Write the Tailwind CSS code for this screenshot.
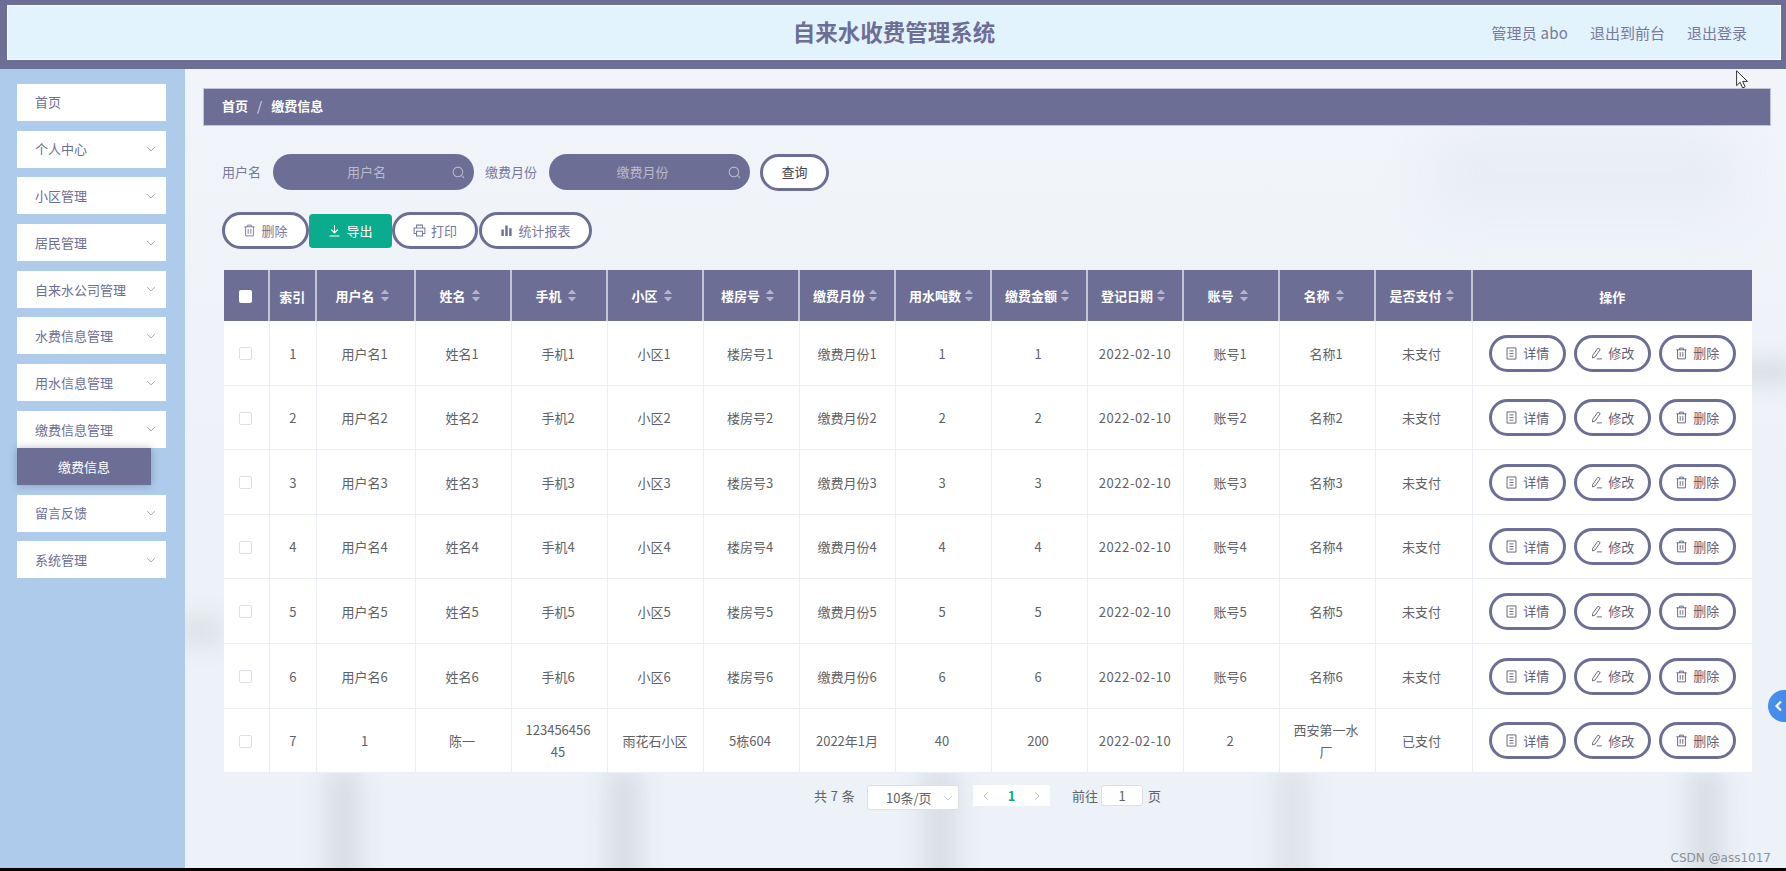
<!DOCTYPE html>
<html lang="zh-CN">
<head>
<meta charset="utf-8">
<title>自来水收费管理系统</title>
<script src="https://cdn.jsdelivr.net/npm/@tailwindcss/browser@4"></script>
</head>
<body class="m-0 overflow-hidden bg-black">
<svg class="hidden" width="0" height="0">
  <symbol id="i-trash" viewBox="0 0 14 14"><path d="M1.5 3h11M5 3V1.2h4V3M2.8 3v9.8h8.4V3M5.6 5.5v5M8.4 5.5v5" fill="none" stroke="currentColor" stroke-width="1"/></symbol>
  <symbol id="i-doc" viewBox="0 0 14 14"><path d="M2.2 1h9.6v12H2.2zM4.8 4.2h4.4M4.8 7h4.4M4.8 9.8h4.4" fill="none" stroke="currentColor" stroke-width="1"/></symbol>
  <symbol id="i-edit" viewBox="0 0 14 14"><path d="M8.6 1.2l2.4 1.6-5.6 8-2.7 1 .2-2.8zM7.2 12.8h5.6" fill="none" stroke="currentColor" stroke-width="1"/></symbol>
  <symbol id="i-print" viewBox="0 0 14 14"><path d="M3.8 4.4V1.2h6.4v3.2M3.6 10.2H1.2V4.4h11.6v5.8h-2.4M3.8 7.8h6.4v5H3.8z" fill="none" stroke="currentColor" stroke-width="1.1"/></symbol>
  <symbol id="i-bars" viewBox="0 0 14 14"><path d="M1.5 6h2.6v7H1.5zM5.7 1.5h2.6V13H5.7zM9.9 4.5h2.6V13H9.9z" fill="currentColor"/></symbol>
  <symbol id="i-down" viewBox="0 0 14 14"><path d="M7 1v8.5M3.4 6L7 9.6 10.6 6M1.6 12.8h10.8" fill="none" stroke="currentColor" stroke-width="1.1"/></symbol>
  <symbol id="i-search" viewBox="0 0 14 14"><circle cx="6.4" cy="6.4" r="5.2" fill="none" stroke="currentColor" stroke-width="1.1"/><path d="M10.2 10.2l2.8 2.8" fill="none" stroke="currentColor" stroke-width="1.1"/></symbol>
  <symbol id="i-chev" viewBox="0 0 12 12"><path d="M1.5 3.8L6 8.3l4.5-4.5" fill="none" stroke="currentColor" stroke-width="1"/></symbol>
  <symbol id="i-sort" viewBox="0 0 10 14"><path d="M5 0.5L9.5 5.5H0.5zM5 13.5L0.5 8.5H9.5z" fill="currentColor"/></symbol>
</svg>

<div class="relative flex h-[871px] w-[1786px] flex-col overflow-hidden font-['Noto_Sans_CJK_SC','Noto_Sans',sans-serif] text-[13px]">

  <header class="h-[69px] shrink-0 bg-[#6d6e95] pb-[9px] pl-[7px] pr-[5px] pt-[5px]">
    <div class="grid h-[55px] grid-cols-[1fr_auto_1fr] items-center border border-white/80 bg-[#e3f3fe] text-[#6d6e95]">
      <div></div>
      <div class="pb-[2px] text-[22.5px] font-bold leading-none">自来水收费管理系统</div>
      <div class="flex justify-end gap-[22px] pr-[33px] text-[15px] leading-none text-[#77789c]">
        <span class="tracking-[0.2px]">管理员 abo</span><span>退出到前台</span><span>退出登录</span>
      </div>
    </div>
  </header>

  <div class="flex min-h-0 flex-1">
    <aside class="flex w-[185px] shrink-0 flex-col gap-[9.7px] bg-[#aecbec] pl-[17px] pt-[15px] text-[#6d6e95]">
      <div class="flex h-[37px] w-[149px] items-center bg-white pb-[1px] pl-[18px]">首页</div>
      <div class="flex h-[37px] w-[149px] items-center justify-between bg-white pl-[18px] pr-[10px]"><span>个人中心</span><svg class="size-[10px] text-[#8e90ad]"><use href="#i-chev"/></svg></div>
      <div class="flex h-[37px] w-[149px] items-center justify-between bg-white pl-[18px] pr-[10px]"><span>小区管理</span><svg class="size-[10px] text-[#8e90ad]"><use href="#i-chev"/></svg></div>
      <div class="flex h-[37px] w-[149px] items-center justify-between bg-white pl-[18px] pr-[10px]"><span>居民管理</span><svg class="size-[10px] text-[#8e90ad]"><use href="#i-chev"/></svg></div>
      <div class="flex h-[37px] w-[149px] items-center justify-between bg-white pl-[18px] pr-[10px]"><span>自来水公司管理</span><svg class="size-[10px] text-[#8e90ad]"><use href="#i-chev"/></svg></div>
      <div class="flex h-[37px] w-[149px] items-center justify-between bg-white pl-[18px] pr-[10px]"><span>水费信息管理</span><svg class="size-[10px] text-[#8e90ad]"><use href="#i-chev"/></svg></div>
      <div class="flex h-[37px] w-[149px] items-center justify-between bg-white pl-[18px] pr-[10px]"><span>用水信息管理</span><svg class="size-[10px] text-[#8e90ad]"><use href="#i-chev"/></svg></div>
      <div>
        <div class="flex h-[37px] w-[149px] items-center justify-between bg-white pl-[18px] pr-[10px]"><span>缴费信息管理</span><svg class="size-[10px] text-[#8e90ad]"><use href="#i-chev"/></svg></div>
        <div class="flex h-[37px] w-[134px] items-center justify-center bg-[#6d6e95] text-white shadow-[0_0_8px_rgba(0,0,0,0.25)]">缴费信息</div>
      </div>
      <div class="flex h-[37px] w-[149px] items-center justify-between bg-white pl-[18px] pr-[10px]"><span>留言反馈</span><svg class="size-[10px] text-[#8e90ad]"><use href="#i-chev"/></svg></div>
      <div class="flex h-[37px] w-[149px] items-center justify-between bg-white pl-[18px] pr-[10px]"><span>系统管理</span><svg class="size-[10px] text-[#8e90ad]"><use href="#i-chev"/></svg></div>
    </aside>

    <main class="relative min-w-0 flex-1 overflow-hidden bg-gradient-to-b from-[#f1f4f9] via-[#eef2f8] to-[#ecf2f8] pl-[18px] pr-[15px] pt-[19px] text-[#606266]">
      <!-- blurred photo backdrop -->
      <div class="absolute bottom-[-30px] left-[141px] h-[130px] w-[34px] bg-[#d8dde4] blur-[12px]"></div>
      <div class="absolute bottom-[-30px] left-[422px] h-[130px] w-[34px] bg-[#d8dde4] blur-[12px]"></div>
      <div class="absolute bottom-[-30px] left-[738px] h-[130px] w-[34px] bg-[#d8dde4] blur-[12px]"></div>
      <div class="absolute bottom-[-30px] left-[1090px] h-[130px] w-[34px] bg-[#dde2e8] blur-[12px]"></div>
      <div class="absolute bottom-[-30px] left-[1504px] h-[130px] w-[34px] bg-[#d8dde4] blur-[12px]"></div>
      <div class="absolute left-[1540px] top-[290px] h-[26px] w-[70px] bg-[#dadfe5] blur-[10px]"></div>
      <div class="absolute left-[-6px] top-[545px] h-[34px] w-[44px] bg-[#dfe3e8] blur-[10px]"></div>
      <div class="absolute left-[1250px] top-[70px] h-[70px] w-[300px] bg-[#e8edf4] blur-[24px]"></div>

      <div class="relative">
        <nav class="flex h-[38px] items-center gap-[8px] border border-white/60 bg-[#6d6e95] pb-[2px] pl-[18px] font-bold text-white">
          <span>首页</span><span class="px-[1px] font-normal text-[#dcdde8]">/</span><span>缴费信息</span>
        </nav>

        <div class="pl-[19px]">
          <div class="mt-[28px] flex h-[36px] items-center">
            <label class="w-[39px] text-[#77789c]">用户名</label>
            <div class="ml-[12px] flex h-[36px] w-[201px] items-center rounded-full bg-[#6d6e95] pr-[9px] text-[#b9bad0]">
              <span class="flex-1 pl-[8px] text-center">用户名</span><svg class="size-[13px]"><use href="#i-search"/></svg>
            </div>
            <label class="ml-[11px] w-[52px] text-[#77789c]">缴费月份</label>
            <div class="ml-[12px] flex h-[36px] w-[201px] items-center rounded-full bg-[#6d6e95] pr-[9px] text-[#b9bad0]">
              <span class="flex-1 pl-[8px] text-center">缴费月份</span><svg class="size-[13px]"><use href="#i-search"/></svg>
            </div>
            <button class="ml-[10px] flex h-[37px] w-[69px] items-center justify-center rounded-full border-[3px] border-[#6d6e95] bg-white text-[#444]">查询</button>
          </div>

          <div class="mt-[22px] flex h-[37px] items-center text-[#77789c]">
            <button class="flex h-[37px] w-[87px] items-center justify-center gap-[5px] rounded-full border-[3px] border-[#6d6e95] bg-white"><svg class="size-[13px]"><use href="#i-trash"/></svg>删除</button>
            <button class="flex h-[34px] w-[83px] items-center justify-center gap-[5px] rounded-[4px] bg-[#0bab8e] text-white"><svg class="size-[13px]"><use href="#i-down"/></svg>导出</button>
            <button class="flex h-[37px] w-[86px] items-center justify-center gap-[5px] rounded-full border-[3px] border-[#6d6e95] bg-white"><svg class="size-[13px]"><use href="#i-print"/></svg>打印</button>
            <button class="ml-[1px] flex h-[37px] w-[113px] items-center justify-center gap-[5px] rounded-full border-[3px] border-[#6d6e95] bg-white"><svg class="size-[13px] text-[#6d6e95]"><use href="#i-bars"/></svg>统计报表</button>
          </div>

          <table class="ml-[1.5px] mt-[21px] w-[1528.5px] table-fixed border-separate border-spacing-0 bg-white text-center [&_td]:h-[64px] [&_td]:border-b [&_td]:border-r [&_td]:border-[#ebeef5] [&_td]:pl-[13px] [&_td]:pr-[15px] [&_td]:pt-[1px] [&_td]:leading-[22px] [&_td]:break-all [&_th]:h-[51px] [&_th]:border-r-2 [&_th]:border-white/60 [&_th]:bg-[#6d6e95] [&_th]:p-0 [&_th]:font-bold [&_th]:text-white">
            <colgroup>
              <col class="w-[46.5px]"><col class="w-[46.5px]"><col class="w-[99px]"><col class="w-[96px]"><col class="w-[96px]"><col class="w-[96px]"><col class="w-[96px]"><col class="w-[96px]"><col class="w-[96px]"><col class="w-[96px]"><col class="w-[96px]"><col class="w-[96px]"><col class="w-[96px]"><col class="w-[97px]"><col>
            </colgroup>
            <thead>
              <tr>
                <th><span class="mx-auto mt-[2px] block size-[13px] rounded-[2px] bg-white"></span></th>
                <th class="pt-[3px]!">索引</th>
                <th><span class="mr-[5px] inline-flex items-center gap-[5px]">用户名<svg class="h-[13px] w-[10px] text-[#b4b5cb]"><use href="#i-sort"/></svg></span></th>
                <th><span class="mr-[5px] inline-flex items-center gap-[5px]">姓名<svg class="h-[13px] w-[10px] text-[#b4b5cb]"><use href="#i-sort"/></svg></span></th>
                <th><span class="mr-[5px] inline-flex items-center gap-[5px]">手机<svg class="h-[13px] w-[10px] text-[#b4b5cb]"><use href="#i-sort"/></svg></span></th>
                <th><span class="mr-[5px] inline-flex items-center gap-[5px]">小区<svg class="h-[13px] w-[10px] text-[#b4b5cb]"><use href="#i-sort"/></svg></span></th>
                <th><span class="mr-[5px] inline-flex items-center gap-[5px]">楼房号<svg class="h-[13px] w-[10px] text-[#b4b5cb]"><use href="#i-sort"/></svg></span></th>
                <th><span class="mr-[2px] inline-flex items-center gap-[3px]">缴费月份<svg class="h-[13px] w-[10px] text-[#b4b5cb]"><use href="#i-sort"/></svg></span></th>
                <th><span class="mr-[2px] inline-flex items-center gap-[3px]">用水吨数<svg class="h-[13px] w-[10px] text-[#b4b5cb]"><use href="#i-sort"/></svg></span></th>
                <th><span class="mr-[2px] inline-flex items-center gap-[3px]">缴费金额<svg class="h-[13px] w-[10px] text-[#b4b5cb]"><use href="#i-sort"/></svg></span></th>
                <th><span class="mr-[2px] inline-flex items-center gap-[3px]">登记日期<svg class="h-[13px] w-[10px] text-[#b4b5cb]"><use href="#i-sort"/></svg></span></th>
                <th><span class="mr-[5px] inline-flex items-center gap-[5px]">账号<svg class="h-[13px] w-[10px] text-[#b4b5cb]"><use href="#i-sort"/></svg></span></th>
                <th><span class="mr-[5px] inline-flex items-center gap-[5px]">名称<svg class="h-[13px] w-[10px] text-[#b4b5cb]"><use href="#i-sort"/></svg></span></th>
                <th><span class="mr-[2px] inline-flex items-center gap-[3px]">是否支付<svg class="h-[13px] w-[10px] text-[#b4b5cb]"><use href="#i-sort"/></svg></span></th>
                <th class="border-r-0! pt-[3px]!">操作</th>
              </tr>
            </thead>
            <tbody>
              <tr class="[&>td]:h-[65px]!">
                <td class="px-0!"><span class="ml-[15px] block size-[13px] rounded-[2px] border border-[#dcdfe6] bg-white"></span></td>
                <td class="px-0!">1</td><td>用户名1</td><td>姓名1</td><td>手机1</td><td>小区1</td><td>楼房号1</td><td class="px-0!">缴费月份1</td><td>1</td><td>1</td><td class="px-0! tracking-[0.6px]">2022-02-10</td><td>账号1</td><td>名称1</td><td class="pr-[17px]!">未支付</td>
                <td class="border-r-0! px-0! pt-0!"><div class="flex justify-center gap-[8px] text-[#5f6076]">
                  <button class="flex h-[37px] w-[77px] items-center justify-center gap-[5px] rounded-full border-[3px] border-[#6d6e95] bg-white"><svg class="size-[13px]"><use href="#i-doc"/></svg>详情</button>
                  <button class="flex h-[37px] w-[77px] items-center justify-center gap-[5px] rounded-full border-[3px] border-[#6d6e95] bg-white"><svg class="size-[13px]"><use href="#i-edit"/></svg>修改</button>
                  <button class="flex h-[37px] w-[77px] items-center justify-center gap-[5px] rounded-full border-[3px] border-[#6d6e95] bg-white"><svg class="size-[13px]"><use href="#i-trash"/></svg>删除</button>
                </div></td>
              </tr>
              <tr>
                <td class="px-0!"><span class="ml-[15px] block size-[13px] rounded-[2px] border border-[#dcdfe6] bg-white"></span></td>
                <td class="px-0!">2</td><td>用户名2</td><td>姓名2</td><td>手机2</td><td>小区2</td><td>楼房号2</td><td class="px-0!">缴费月份2</td><td>2</td><td>2</td><td class="px-0! tracking-[0.6px]">2022-02-10</td><td>账号2</td><td>名称2</td><td class="pr-[17px]!">未支付</td>
                <td class="border-r-0! px-0! pt-0!"><div class="flex justify-center gap-[8px] text-[#5f6076]">
                  <button class="flex h-[37px] w-[77px] items-center justify-center gap-[5px] rounded-full border-[3px] border-[#6d6e95] bg-white"><svg class="size-[13px]"><use href="#i-doc"/></svg>详情</button>
                  <button class="flex h-[37px] w-[77px] items-center justify-center gap-[5px] rounded-full border-[3px] border-[#6d6e95] bg-white"><svg class="size-[13px]"><use href="#i-edit"/></svg>修改</button>
                  <button class="flex h-[37px] w-[77px] items-center justify-center gap-[5px] rounded-full border-[3px] border-[#6d6e95] bg-white"><svg class="size-[13px]"><use href="#i-trash"/></svg>删除</button>
                </div></td>
              </tr>
              <tr class="[&>td]:h-[65px]!">
                <td class="px-0!"><span class="ml-[15px] block size-[13px] rounded-[2px] border border-[#dcdfe6] bg-white"></span></td>
                <td class="px-0!">3</td><td>用户名3</td><td>姓名3</td><td>手机3</td><td>小区3</td><td>楼房号3</td><td class="px-0!">缴费月份3</td><td>3</td><td>3</td><td class="px-0! tracking-[0.6px]">2022-02-10</td><td>账号3</td><td>名称3</td><td class="pr-[17px]!">未支付</td>
                <td class="border-r-0! px-0! pt-0!"><div class="flex justify-center gap-[8px] text-[#5f6076]">
                  <button class="flex h-[37px] w-[77px] items-center justify-center gap-[5px] rounded-full border-[3px] border-[#6d6e95] bg-white"><svg class="size-[13px]"><use href="#i-doc"/></svg>详情</button>
                  <button class="flex h-[37px] w-[77px] items-center justify-center gap-[5px] rounded-full border-[3px] border-[#6d6e95] bg-white"><svg class="size-[13px]"><use href="#i-edit"/></svg>修改</button>
                  <button class="flex h-[37px] w-[77px] items-center justify-center gap-[5px] rounded-full border-[3px] border-[#6d6e95] bg-white"><svg class="size-[13px]"><use href="#i-trash"/></svg>删除</button>
                </div></td>
              </tr>
              <tr>
                <td class="px-0!"><span class="ml-[15px] block size-[13px] rounded-[2px] border border-[#dcdfe6] bg-white"></span></td>
                <td class="px-0!">4</td><td>用户名4</td><td>姓名4</td><td>手机4</td><td>小区4</td><td>楼房号4</td><td class="px-0!">缴费月份4</td><td>4</td><td>4</td><td class="px-0! tracking-[0.6px]">2022-02-10</td><td>账号4</td><td>名称4</td><td class="pr-[17px]!">未支付</td>
                <td class="border-r-0! px-0! pt-0!"><div class="flex justify-center gap-[8px] text-[#5f6076]">
                  <button class="flex h-[37px] w-[77px] items-center justify-center gap-[5px] rounded-full border-[3px] border-[#6d6e95] bg-white"><svg class="size-[13px]"><use href="#i-doc"/></svg>详情</button>
                  <button class="flex h-[37px] w-[77px] items-center justify-center gap-[5px] rounded-full border-[3px] border-[#6d6e95] bg-white"><svg class="size-[13px]"><use href="#i-edit"/></svg>修改</button>
                  <button class="flex h-[37px] w-[77px] items-center justify-center gap-[5px] rounded-full border-[3px] border-[#6d6e95] bg-white"><svg class="size-[13px]"><use href="#i-trash"/></svg>删除</button>
                </div></td>
              </tr>
              <tr class="[&>td]:h-[65px]!">
                <td class="px-0!"><span class="ml-[15px] block size-[13px] rounded-[2px] border border-[#dcdfe6] bg-white"></span></td>
                <td class="px-0!">5</td><td>用户名5</td><td>姓名5</td><td>手机5</td><td>小区5</td><td>楼房号5</td><td class="px-0!">缴费月份5</td><td>5</td><td>5</td><td class="px-0! tracking-[0.6px]">2022-02-10</td><td>账号5</td><td>名称5</td><td class="pr-[17px]!">未支付</td>
                <td class="border-r-0! px-0! pt-0!"><div class="flex justify-center gap-[8px] text-[#5f6076]">
                  <button class="flex h-[37px] w-[77px] items-center justify-center gap-[5px] rounded-full border-[3px] border-[#6d6e95] bg-white"><svg class="size-[13px]"><use href="#i-doc"/></svg>详情</button>
                  <button class="flex h-[37px] w-[77px] items-center justify-center gap-[5px] rounded-full border-[3px] border-[#6d6e95] bg-white"><svg class="size-[13px]"><use href="#i-edit"/></svg>修改</button>
                  <button class="flex h-[37px] w-[77px] items-center justify-center gap-[5px] rounded-full border-[3px] border-[#6d6e95] bg-white"><svg class="size-[13px]"><use href="#i-trash"/></svg>删除</button>
                </div></td>
              </tr>
              <tr class="[&>td]:h-[65px]!">
                <td class="px-0!"><span class="ml-[15px] block size-[13px] rounded-[2px] border border-[#dcdfe6] bg-white"></span></td>
                <td class="px-0!">6</td><td>用户名6</td><td>姓名6</td><td>手机6</td><td>小区6</td><td>楼房号6</td><td class="px-0!">缴费月份6</td><td>6</td><td>6</td><td class="px-0! tracking-[0.6px]">2022-02-10</td><td>账号6</td><td>名称6</td><td class="pr-[17px]!">未支付</td>
                <td class="border-r-0! px-0! pt-0!"><div class="flex justify-center gap-[8px] text-[#5f6076]">
                  <button class="flex h-[37px] w-[77px] items-center justify-center gap-[5px] rounded-full border-[3px] border-[#6d6e95] bg-white"><svg class="size-[13px]"><use href="#i-doc"/></svg>详情</button>
                  <button class="flex h-[37px] w-[77px] items-center justify-center gap-[5px] rounded-full border-[3px] border-[#6d6e95] bg-white"><svg class="size-[13px]"><use href="#i-edit"/></svg>修改</button>
                  <button class="flex h-[37px] w-[77px] items-center justify-center gap-[5px] rounded-full border-[3px] border-[#6d6e95] bg-white"><svg class="size-[13px]"><use href="#i-trash"/></svg>删除</button>
                </div></td>
              </tr>
              <tr>
                <td class="px-0!"><span class="ml-[15px] block size-[13px] rounded-[2px] border border-[#dcdfe6] bg-white"></span></td>
                <td class="px-0!">7</td><td>1</td><td>陈一</td><td>12345645645</td><td class="px-0!">雨花石小区</td><td>5栋604</td><td class="px-0!">2022年1月</td><td>40</td><td>200</td><td class="px-0! tracking-[0.6px]">2022-02-10</td><td>2</td><td>西安第一水厂</td><td class="pr-[17px]!">已支付</td>
                <td class="border-r-0! px-0! pt-0!"><div class="flex justify-center gap-[8px] text-[#5f6076]">
                  <button class="flex h-[37px] w-[77px] items-center justify-center gap-[5px] rounded-full border-[3px] border-[#6d6e95] bg-white"><svg class="size-[13px]"><use href="#i-doc"/></svg>详情</button>
                  <button class="flex h-[37px] w-[77px] items-center justify-center gap-[5px] rounded-full border-[3px] border-[#6d6e95] bg-white"><svg class="size-[13px]"><use href="#i-edit"/></svg>修改</button>
                  <button class="flex h-[37px] w-[77px] items-center justify-center gap-[5px] rounded-full border-[3px] border-[#6d6e95] bg-white"><svg class="size-[13px]"><use href="#i-trash"/></svg>删除</button>
                </div></td>
              </tr>
            </tbody>
          </table>

          <div class="ml-[592px] mt-[12px] flex items-start text-[#606266]">
            <span class="mt-[1px] w-[40px] whitespace-nowrap leading-[20px] tracking-[0.4px]">共 7 条</span>
            <div class="ml-[13px] flex h-[25px] w-[92px] items-center justify-between rounded-[3px] border border-[#dcdfe6] bg-white pl-[18px] pr-[5px]"><span>10条/页</span><svg class="size-[10px] text-[#b8bcc4]"><use href="#i-chev"/></svg></div>
            <div class="ml-[14px] flex h-[21px] w-[77px] items-center justify-between bg-white px-[8px] text-[#a9acb3]">
              <svg class="size-[10px] rotate-90"><use href="#i-chev"/></svg><span class="font-bold text-[#0bab8e]">1</span><svg class="size-[10px] -rotate-90"><use href="#i-chev"/></svg>
            </div>
            <span class="ml-[22px] mt-[1px] leading-[20px]">前往</span>
            <div class="ml-[3px] flex h-[21px] w-[42px] items-center justify-center rounded-[3px] border border-[#dcdfe6] bg-white">1</div>
            <span class="ml-[5px] mt-[1px] leading-[20px]">页</span>
          </div>
        </div>
      </div>

      <div class="absolute bottom-[4px] right-[15px] font-['DejaVu_Sans',sans-serif] text-[12px] leading-none text-[#8b9098]">CSDN @ass1017</div>
    </main>
  </div>

  <div class="h-[3px] shrink-0 bg-black"></div>

  <!-- overlays -->
  <div class="absolute left-[1768px] top-[690px] flex h-[32px] w-[32px] items-center rounded-full bg-gradient-to-r from-[#4a90ee] to-[#3f83ea] pl-[5px]">
    <svg class="size-[12px] text-white" viewBox="0 0 12 12" aria-hidden="true"><path d="M8 1.5L3.5 6 8 10.5" fill="none" stroke="currentColor" stroke-width="2.2"/></svg>
  </div>
  <svg class="absolute left-[1736px] top-[70px] h-[19px] w-[12px]" viewBox="0 0 12 19"><path d="M.6.8v14.8l3.6-3.3 2.4 5.6 2.5-1.1-2.4-5.4h4.8z" fill="#fff" stroke="#333" stroke-width="1"/></svg>
</div>
</body>
</html>
